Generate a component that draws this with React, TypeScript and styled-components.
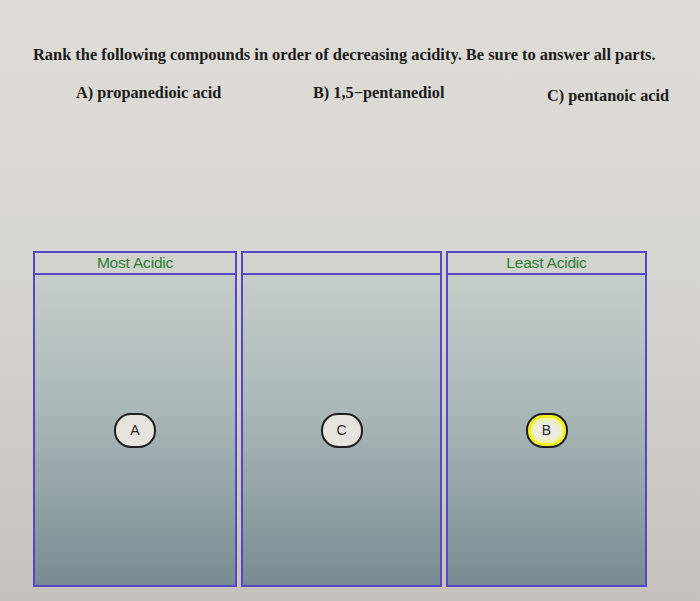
import React from "react";
import styled, { createGlobalStyle } from "styled-components";

const Global = createGlobalStyle`
  html, body {
    margin: 0;
    padding: 0;
  }
  body {
    width: 700px;
    height: 601px;
    overflow: hidden;
  }
`;

const Page = styled.div`
  width: 700px;
  height: 601px;
  box-sizing: border-box;
  padding-top: 45px;
  background: linear-gradient(180deg, #dedcd6 0%, #d6d6d0 45%, #ccc8c4 80%, #c6c1bd 100%);
  font-family: "Liberation Serif", "Times New Roman", serif;
  color: #1c1c1c;
`;

const Question = styled.div`
  margin-left: 33px;
  font-size: 16.4px;
  font-weight: bold;
  line-height: 20px;
`;

const Options = styled.div`
  display: grid;
  grid-template-columns: 237px 234px auto;
  padding-left: 76px;
  margin-top: 18px;
  font-size: 16.3px;
  font-weight: bold;
  line-height: 20px;
`;

const Option = styled.div<{ $drop?: number }>`
  white-space: nowrap;
  transform: translateY(${(p) => p.$drop ?? 0}px);
`;

const Board = styled.div`
  display: grid;
  grid-template-columns: 204px 201px 201px;
  column-gap: 4px;
  margin-top: 148px;
  margin-left: 33px;
`;

const Column = styled.div`
  display: flex;
  flex-direction: column;
  height: 336px;
  box-sizing: border-box;
  border: 2px solid #5548c2;
`;

const Header = styled.div`
  height: 22px;
  flex: none;
  box-sizing: border-box;
  border-bottom: 2px solid #5548c2;
  background: #d0d4cd;
  display: flex;
  align-items: center;
  justify-content: center;
  font-family: "Liberation Sans", Arial, sans-serif;
  font-size: 15.5px;
  letter-spacing: -0.2px;
  color: #2f7d36;
`;

const Body = styled.div`
  flex: 1;
  display: flex;
  align-items: center;
  justify-content: center;
  background: linear-gradient(180deg, #c6cdc9 0%, #adbab9 40%, #8fa0a4 75%, #798b92 100%);
`;

const Chip = styled.div<{ $active?: boolean }>`
  width: 42px;
  height: 35px;
  box-sizing: border-box;
  border-radius: 17px;
  border: 2px solid #1f1f1f;
  background: ${(p) => (p.$active ? "#ecece4" : "#e6e4de")};
  box-shadow: ${(p) =>
    p.$active ? "inset 0 0 0 3px #eef020, inset 0 0 4px 5px #f4f48a" : "none"};
  display: flex;
  align-items: center;
  justify-content: center;
  font-family: "Liberation Sans", Arial, sans-serif;
  font-size: 14px;
  color: #2a2a2a;
`;

const columns = [
  { label: "Most Acidic", chip: "A", active: false },
  { label: "", chip: "C", active: false },
  { label: "Least Acidic", chip: "B", active: true },
];

export default function App() {
  return (
    <>
      <Global />
      <Page>
        <Question>
          Rank the following compounds in order of decreasing acidity. Be sure to answer all parts.
        </Question>
        <Options>
          <Option>A) propanedioic acid</Option>
          <Option>B) 1,5−pentanediol</Option>
          <Option $drop={3}>C) pentanoic acid</Option>
        </Options>
        <Board>
          {columns.map((c, i) => (
            <Column key={i}>
              <Header>{c.label}</Header>
              <Body>
                <Chip $active={c.active}>{c.chip}</Chip>
              </Body>
            </Column>
          ))}
        </Board>
      </Page>
    </>
  );
}
